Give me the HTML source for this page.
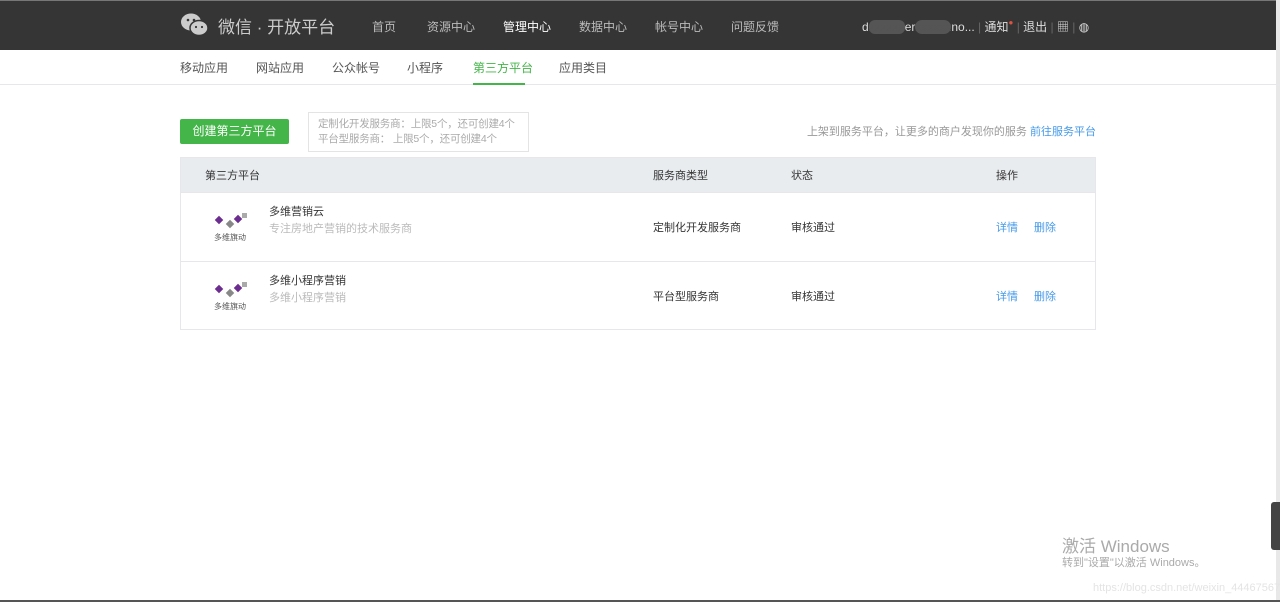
<!DOCTYPE html>
<html><head><meta charset="utf-8"><style>
*{margin:0;padding:0;box-sizing:border-box}
body{width:1280px;height:602px;overflow:hidden;background:#fff;font-family:"Liberation Sans","Noto Sans CJK SC",sans-serif;font-size:12px;color:#353535;position:relative}
.top{position:absolute;left:0;top:0;width:1276px;height:50px;background:#353535;border-top:1px solid #777}
.sb{position:absolute;right:0;top:0;width:4px;height:602px;background:#e8e8e8}
.logo{position:absolute;left:180px;top:11px;color:#ccc;font-size:17px;display:flex;align-items:center}
.nav a{position:absolute;top:17px;color:#bbb;font-size:12px;text-decoration:none}
.sub{position:absolute;top:50px;left:0;width:1276px;height:35px;border-bottom:1px solid #e7e7eb}
.sub a{position:absolute;top:9px;color:#555;font-size:12px}
.btn{position:absolute;left:180px;top:119px;width:109px;height:25px;background:#44b549;color:#fff;border-radius:2px;text-align:center;line-height:25px;font-size:12px}
.tip{position:absolute;left:308px;top:112px;width:221px;height:40px;border:1px solid #e4e4e4;color:#aaa;font-size:10.5px;line-height:15px;padding:4px 9px;white-space:nowrap;letter-spacing:-0.2px}
.tbl{position:absolute;left:180px;top:157px;width:916px;height:173px;border:1px solid #e7e7eb}
.th{height:34px;background:#e9ecef;position:relative}
.row{height:69px;position:relative;border-top:1px solid #e7e7eb}
.c{position:absolute;font-size:11px}
.lk{color:#459ae9}
</style></head><body>
<div class="top">
<div class="logo"><svg width="30" height="26" viewBox="0 0 30 26"><ellipse cx="11" cy="10" rx="10" ry="8.5" fill="#ccc"/><ellipse cx="19" cy="16" rx="9" ry="7.5" fill="#ccc" stroke="#353535" stroke-width="1.5"/><circle cx="8" cy="8" r="1.3" fill="#353535"/><circle cx="14" cy="8" r="1.3" fill="#353535"/><circle cx="16" cy="15" r="1.1" fill="#353535"/><circle cx="22" cy="15" r="1.1" fill="#353535"/></svg><span style="margin-left:8px">微信 · 开放平台</span></div>
<div class="nav"><a style="left:372px">首页</a><a style="left:427px">资源中心</a><a style="left:503px;color:#fff">管理中心</a><a style="left:579px">数据中心</a><a style="left:655px">帐号中心</a><a style="left:731px">问题反馈</a>
<a style="left:862px;color:#ddd">d<span style="background:#555;color:#555;border-radius:6px">xxxxxx</span>er<span style="background:#555;color:#555;border-radius:8px">xxxxxx</span>no... <span style="color:#666">|</span> 通知<span style="color:#e0523f;font-size:8px;vertical-align:top">●</span> <span style="color:#666">|</span> 退出 <span style="color:#666">|</span> ▦ <span style="color:#666">|</span> ◍</a></div>
</div>
<div class="sb"></div>
<div class="sub"><a style="left:180px">移动应用</a><a style="left:256px">网站应用</a><a style="left:332px">公众帐号</a><a style="left:407px">小程序</a><a style="left:473px;color:#44b549">第三方平台</a><div style="position:absolute;left:473px;top:33px;width:52px;height:2px;background:#44b549"></div><a style="left:559px">应用类目</a></div>
<div class="btn">创建第三方平台</div>
<div class="tip">定制化开发服务商：上限5个，还可创建4个<br>平台型服务商： 上限5个，还可创建4个</div>
<div style="position:absolute;right:184px;top:123px;font-size:11px;color:#999;white-space:nowrap">上架到服务平台，让更多的商户发现你的服务 <span class="lk">前往服务平台</span></div>
<div class="tbl">
<div class="th"><span class="c" style="left:24px;top:9px">第三方平台</span><span class="c" style="left:472px;top:9px">服务商类型</span><span class="c" style="left:610px;top:9px">状态</span><span class="c" style="left:815px;top:9px">操作</span></div>
<div class="row"><svg class="c" style="left:32px;top:18px" width="40" height="32" viewBox="0 0 40 32"><rect x="3" y="6" width="6" height="6" fill="#6b2d8f" transform="rotate(45 6 9)"/><rect x="14" y="10" width="6" height="6" fill="#888" transform="rotate(45 17 13)"/><rect x="22" y="5" width="6" height="6" fill="#6b2d8f" transform="rotate(45 25 8)"/><rect x="29" y="2" width="5" height="5" fill="#aaa"/><text x="1" y="29" font-size="8" fill="#555">多维旗动</text></svg><span class="c" style="left:88px;top:10px;font-size:11px">多维营销云</span><span class="c" style="left:88px;top:27px;color:#bbb">专注房地产营销的技术服务商</span><span class="c" style="left:472px;top:26px">定制化开发服务商</span><span class="c" style="left:610px;top:26px">审核通过</span><span class="c lk" style="left:815px;top:26px">详情</span><span class="c lk" style="left:853px;top:26px">删除</span></div>
<div class="row"><svg class="c" style="left:32px;top:18px" width="40" height="32" viewBox="0 0 40 32"><rect x="3" y="6" width="6" height="6" fill="#6b2d8f" transform="rotate(45 6 9)"/><rect x="14" y="10" width="6" height="6" fill="#888" transform="rotate(45 17 13)"/><rect x="22" y="5" width="6" height="6" fill="#6b2d8f" transform="rotate(45 25 8)"/><rect x="29" y="2" width="5" height="5" fill="#aaa"/><text x="1" y="29" font-size="8" fill="#555">多维旗动</text></svg><span class="c" style="left:88px;top:10px;font-size:11px">多维小程序营销</span><span class="c" style="left:88px;top:27px;color:#bbb">多维小程序营销</span><span class="c" style="left:472px;top:26px">平台型服务商</span><span class="c" style="left:610px;top:26px">审核通过</span><span class="c lk" style="left:815px;top:26px">详情</span><span class="c lk" style="left:853px;top:26px">删除</span></div>
</div>
<div style="position:absolute;left:1062px;top:532px;color:#aaa;font-size:17px">激活 Windows</div>
<div style="position:absolute;left:1062px;top:554px;color:#aaa;font-size:11px">转到"设置"以激活 Windows。</div>
<div style="position:absolute;left:1093px;top:582px;color:#e4e4e4;font-size:11px">https://blog.csdn.net/weixin_44467567</div>
<div style="position:absolute;left:1271px;top:502px;width:9px;height:48px;background:#444;border-radius:3px 0 0 3px"></div>
<div style="position:absolute;left:0;top:600px;width:1280px;height:2px;background:#555"></div>
</body></html>
